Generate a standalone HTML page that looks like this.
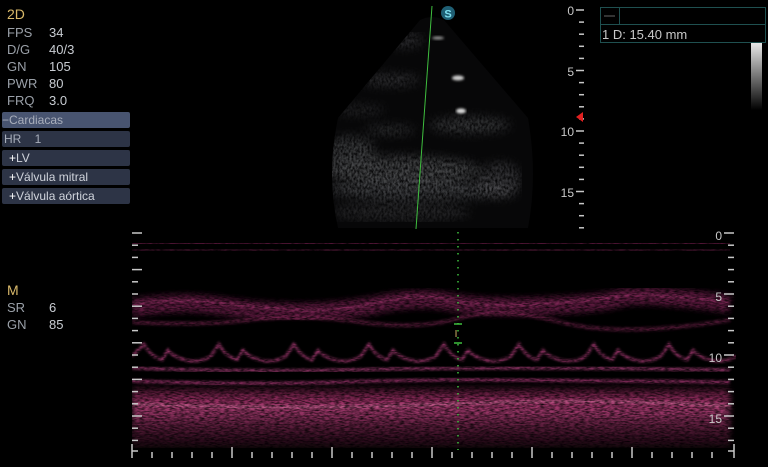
<!DOCTYPE html>
<html><head><meta charset="utf-8"><style>
html,body{margin:0;padding:0;background:#000;width:768px;height:467px;overflow:hidden}
body{position:relative;font-family:"Liberation Sans",sans-serif}
.t{position:absolute;font-size:13px;color:#9aa0a8;line-height:17px}
.y{color:#d9b96a;font-size:14px}
.b{position:absolute;left:2px;width:128px;height:16px;background:#2d3446;border-radius:2px;color:#a8aebb;font-size:12px;line-height:16px;box-sizing:border-box;padding-left:2px}
.b.w{color:#d0d4dc}
.b.w span{color:#fff}
svg{position:absolute;left:0;top:0}
</style></head><body>
<svg width="768" height="467" viewBox="0 0 768 467">
<defs>
<filter id="bl" x="-10%" y="-50%" width="120%" height="200%"><feGaussianBlur stdDeviation="1.2"/></filter>
<filter id="bl3" x="-10%" y="-50%" width="120%" height="200%"><feGaussianBlur stdDeviation="3"/></filter>
<filter id="sb" x="-20%" y="-20%" width="140%" height="140%"><feGaussianBlur stdDeviation="5"/></filter>
<filter id="noise" x="0" y="0" width="100%" height="100%">
<feTurbulence type="fractalNoise" baseFrequency="0.2 0.7" numOctaves="2" seed="3" result="n"/>
<feColorMatrix in="n" type="matrix" values="0 0 0 0 0  0 0 0 0 0  0 0 0 0 0  0 0 0 -1.6 1.5" result="a"/>
<feComposite in="SourceGraphic" in2="a" operator="in"/>
</filter>
<filter id="noise2" x="0" y="0" width="100%" height="100%">
<feTurbulence type="fractalNoise" baseFrequency="0.5 0.3" numOctaves="2" seed="7" result="n"/>
<feColorMatrix in="n" type="matrix" values="0 0 0 0 0  0 0 0 0 0  0 0 0 0 0  0 0 0 -2 1.6" result="a"/>
<feComposite in="SourceGraphic" in2="a" operator="in"/>
</filter>
<linearGradient id="deep" x1="0" y1="0" x2="0" y2="1">
<stop offset="0" stop-color="#b0306e" stop-opacity="0.15"/>
<stop offset="0.2" stop-color="#c03a7c" stop-opacity="0.75"/>
<stop offset="0.4" stop-color="#c84888" stop-opacity="0.8"/>
<stop offset="1" stop-color="#5a1236" stop-opacity="0.3"/>
</linearGradient>
<clipPath id="sec"><path d="M420 20 Q432 14 444 20 L528 118 Q538 175 528 228 L338 228 Q326 175 338 118 Z"/></clipPath>
</defs>
<g clip-path="url(#sec)">
<rect x="320" y="0" width="220" height="230" fill="#070708"/>
<g filter="url(#noise2)">
<g filter="url(#sb)" fill="#7a7c80">
<ellipse cx="400" cy="170" rx="80" ry="14" opacity="0.5"/>
<ellipse cx="420" cy="190" rx="95" ry="10" opacity="0.45"/>
<ellipse cx="350" cy="150" rx="25" ry="14" opacity="0.4"/>
<ellipse cx="390" cy="80" rx="30" ry="6" opacity="0.35"/>
<ellipse cx="470" cy="125" rx="40" ry="8" opacity="0.4"/>
<ellipse cx="500" cy="180" rx="22" ry="18" opacity="0.35"/>
<ellipse cx="400" cy="212" rx="70" ry="10" opacity="0.25"/>
<ellipse cx="405" cy="40" rx="18" ry="8" opacity="0.3"/>
<ellipse cx="390" cy="130" rx="25" ry="4" opacity="0.4"/>
<ellipse cx="360" cy="110" rx="25" ry="5" opacity="0.25"/>
</g>
</g>
<ellipse cx="458" cy="78" rx="6" ry="2.5" fill="#cfcfcf" filter="url(#bl)"/>
<ellipse cx="461" cy="111" rx="5" ry="2.5" fill="#dcdcdc" filter="url(#bl)"/>
<ellipse cx="438" cy="38" rx="6" ry="1.5" fill="#999" filter="url(#bl)"/>
</g>
<line x1="432" y1="6" x2="416" y2="229" stroke="#3fbf3f" stroke-width="1"/>
<circle cx="448" cy="13" r="7" fill="#1f5f74"/>
<text x="448" y="17.5" font-size="11" font-weight="bold" fill="#7fe0f0" text-anchor="middle" font-family="Liberation Sans">S</text>
<g filter="url(#noise)">
<rect x="132" y="386" width="598" height="62" fill="url(#deep)" filter="url(#bl3)"/>
<path d="M132 404 Q300 410 450 404 T730 406" stroke="#f08ab8" stroke-width="2" fill="none" opacity="0.7" filter="url(#bl)"/>
<path d="M132 308 Q180 300 220 306 T300 312 T380 304 T450 302 T540 306 T620 298 T730 304" stroke="#7a2452" stroke-width="18" fill="none" opacity="0.75" filter="url(#bl3)"/>
<path d="M132 304 Q180 298 220 303 T300 310 T380 302 T450 300 T540 304 T620 296 T730 302" stroke="#b8407e" stroke-width="2" fill="none" opacity="0.7" filter="url(#bl)"/>
<path d="M132 322 Q200 326 250 320 T360 322 T460 318 T560 322 T730 320" stroke="#8a2a5c" stroke-width="4" fill="none" opacity="0.6" filter="url(#bl)"/>
<path id="mv" stroke="#a83a74" stroke-width="2.5" fill="none" filter="url(#bl)"/>
<path d="M132 368 Q250 372 340 370 T520 368 T730 370" stroke="#a03a72" stroke-width="3" fill="none" filter="url(#bl)"/>
<path d="M132 381 Q250 385 340 382 T520 380 T730 382" stroke="#a03670" stroke-width="3" fill="none" filter="url(#bl)"/>
<line x1="132" y1="243" x2="730" y2="243" stroke="#6a1c46" stroke-width="1.5"/>
<line x1="132" y1="250" x2="730" y2="250" stroke="#5a1a3e" stroke-width="1"/>
<line x1="132" y1="257" x2="730" y2="257" stroke="#9a306a" stroke-width="2" filter="url(#bl)"/>
<line x1="132" y1="263" x2="730" y2="263" stroke="#7a2652" stroke-width="2" filter="url(#bl)"/>
</g>
<line x1="458" y1="232" x2="458" y2="450" stroke="#3fbf3f" stroke-width="1.5" stroke-dasharray="1.5 5.5"/>
<line x1="454" y1="324" x2="462" y2="324" stroke="#3fbf3f" stroke-width="1.5"/>
<line x1="454" y1="343" x2="462" y2="343" stroke="#3fbf3f" stroke-width="1.5"/>
<text x="456" y="337" font-size="10" fill="#d9b96a" text-anchor="middle">I</text>
<g id="ticks" stroke="#c8c8c8" stroke-width="1.5"></g>
<path d="M583 112 L576 117 L583 122 Z" fill="#e02020"/>
<g font-size="12" fill="#c8c8c8" text-anchor="end" font-family="Liberation Sans">
<text x="574" y="15">0</text><text x="574" y="76">5</text><text x="574" y="136">10</text><text x="574" y="197">15</text>
<text x="722" y="240">0</text><text x="722" y="301">5</text><text x="722" y="362">10</text><text x="722" y="423">15</text>
</g>
<defs><linearGradient id="gs" x1="0" y1="0" x2="0" y2="1"><stop offset="0" stop-color="#e8e8e8"/><stop offset="1" stop-color="#000"/></linearGradient></defs>
<rect x="751" y="43" width="11" height="67" fill="url(#gs)"/>
<rect x="600.5" y="7.5" width="165" height="35" fill="none" stroke="#1f5050"/>
<line x1="600" y1="24.5" x2="766" y2="24.5" stroke="#1f5050"/>
<line x1="619.5" y1="7" x2="619.5" y2="24" stroke="#1f5050"/>
<line x1="604" y1="16" x2="615" y2="16" stroke="#666" stroke-width="1"/>
<text x="602" y="39" font-size="13" fill="#c8c8c8" font-family="Liberation Sans">1  D: 15.40  mm</text>
</svg>
<div class="t y" style="left:7px;top:6px">2D</div>
<div class="t" style="left:7px;top:24px">FPS</div><div class="t" style="left:49px;top:24px;color:#c8ccd2">34</div>
<div class="t" style="left:7px;top:41px">D/G</div><div class="t" style="left:49px;top:41px;color:#c8ccd2">40/3</div>
<div class="t" style="left:7px;top:58px">GN</div><div class="t" style="left:49px;top:58px;color:#c8ccd2">105</div>
<div class="t" style="left:7px;top:75px">PWR</div><div class="t" style="left:49px;top:75px;color:#c8ccd2">80</div>
<div class="t" style="left:7px;top:92px">FRQ</div><div class="t" style="left:49px;top:92px;color:#c8ccd2">3.0</div>
<div class="b" style="top:112px;background:#485470;padding-left:0">−Cardiacas</div>
<div class="b" style="top:131px">HR &nbsp;&nbsp;&nbsp;1</div>
<div class="b w" style="top:150px;padding-left:7px"><span>+</span>LV</div>
<div class="b w" style="top:169px;padding-left:7px"><span>+</span>Válvula mitral</div>
<div class="b w" style="top:188px;padding-left:7px"><span>+</span>Válvula aórtica</div>
<div class="t y" style="left:7px;top:282px">M</div>
<div class="t" style="left:7px;top:299px">SR</div><div class="t" style="left:49px;top:299px;color:#c8ccd2">6</div>
<div class="t" style="left:7px;top:316px">GN</div><div class="t" style="left:49px;top:316px;color:#c8ccd2">85</div>
<script>
var g=document.getElementById('ticks'),s='';
function L(a,b,c,d){s+='<line x1="'+a+'" y1="'+b+'" x2="'+c+'" y2="'+d+'"/>';}
for(var i=0;i<=18;i++){var y=10+i*12.1;L(i%5==0?576:579,y,584,y);}
for(var i=0;i<=17;i++){var y=233+i*12.2;L(132,y,i%3==0?142:138,y);L(i%5==0?724:728,y,734,y);}
for(var x=152,k=1;x<=722;x+=20,k++){L(x,(k%5==0)?447:452,x,458);}
L(132,444,132,458);L(132,451,138,451);L(734,444,734,458);L(728,451,734,451);
g.innerHTML=s;
var d='M132 356';
for(var c=140;c<730;c+=75){d+=' L'+(c+4)+' 344 Q'+(c+10)+' 356 '+(c+22)+' 360 L'+(c+28)+' 350 Q'+(c+34)+' 358 '+(c+50)+' 361 Q'+(c+62)+' 362 '+(c+71)+' 356';}
document.getElementById('mv').setAttribute('d',d);
</script>
</body></html>
